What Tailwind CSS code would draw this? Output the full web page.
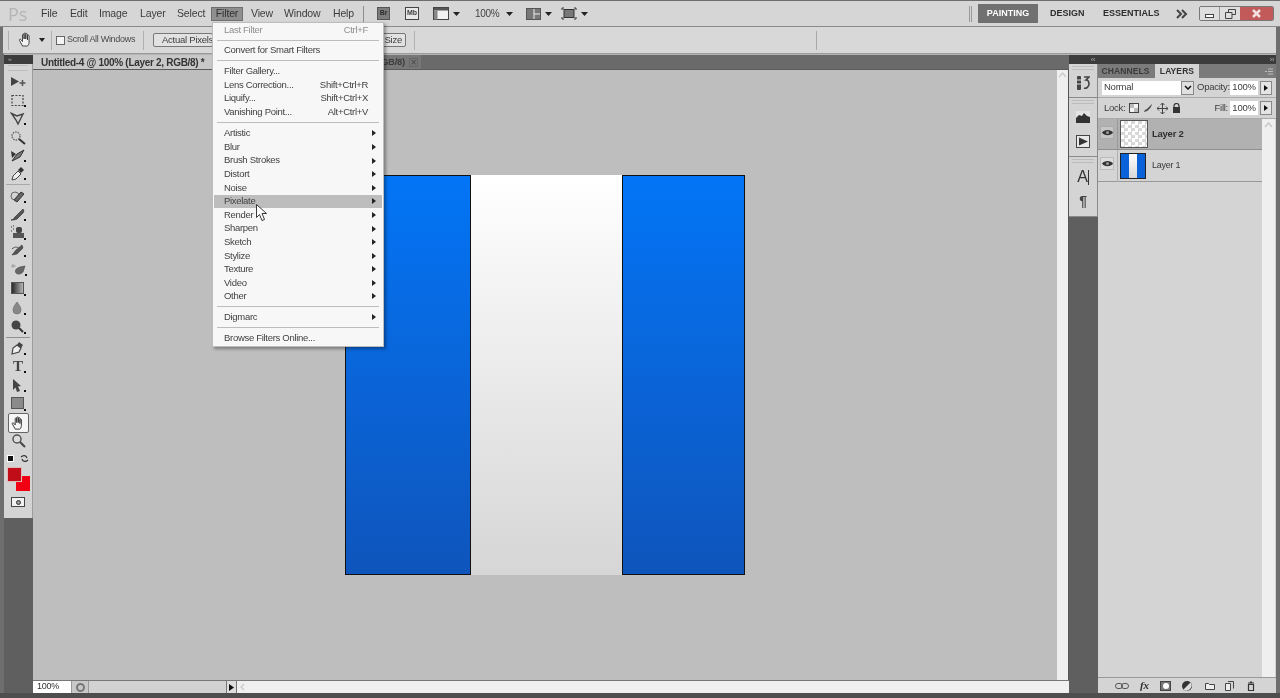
<!DOCTYPE html>
<html lang="en">
<head>
  <meta charset="UTF-8">
  <title>Adobe Photoshop CS5</title>
  <script src="https://cdn.jsdelivr.net/npm/@tailwindcss/browser@4"></script>
</head>
<body class="bg-[#6e6e6e] overflow-hidden">
<div class="relative w-[1280px] h-[698px] flex flex-col bg-[#6e6e6e] text-[#3c3c3c] text-[9.5px] tracking-[-0.25px] font-['Liberation_Sans',sans-serif] overflow-hidden blur-[0.3px]">

  <!-- menu bar -->
  <div class="h-[26px] mt-px shrink-0 flex items-center bg-[#d6d6d6] border-b border-[#8a8a8a] text-[10.5px] tracking-[-0.15px]">
    <span class="ml-[8px] w-[33px] text-[18px] leading-none text-[#b4b4b4] font-['Open_Sans',sans-serif]">Ps</span>
    <span class="w-[29px]">File</span>
    <span class="w-[29px]">Edit</span>
    <span class="w-[41px]">Image</span>
    <span class="w-[37px]">Layer</span>
    <span class="w-[34px]">Select</span>
    <span class="w-[32px] h-[14px] flex items-center justify-center bg-[#8f8f8f] border border-[#6f6f6f] text-[#303030]">Filter</span>
    <span class="ml-[8px] w-[33px]">View</span>
    <span class="w-[49px]">Window</span>
    <span class="w-[30px]">Help</span>
    <span class="w-px h-[16px] bg-[#8c8c8c]"></span>
    <span class="ml-[13px] w-[13px] h-[13px] flex items-center justify-center bg-[#7d7d7d] border border-[#555] text-[7px] font-bold text-[#2c2c2c]">Br</span>
    <span class="ml-[15px] w-[14px] h-[13px] flex items-center justify-center bg-[#e8e8e8] border border-[#444] text-[7px] font-bold">Mb</span>
    <svg class="ml-[14px]" width="16" height="13" viewBox="0 0 16 13"><rect x=".5" y=".5" width="15" height="12" fill="#f2f2f2" stroke="#444"/><rect x="1" y="1" width="14" height="2.5" fill="#555"/><rect x="1" y="3.5" width="3.5" height="9" fill="#888"/></svg>
    <svg class="ml-[4px]" width="7" height="4" viewBox="0 0 7 4"><path d="M0 0h7L3.500 4z" fill="#222"/></svg>
    <span class="ml-[15px] w-[29px] text-[10px] tracking-[-0.3px] text-[#444]">100%</span>
    <svg class="ml-[2px]" width="7" height="4" viewBox="0 0 7 4"><path d="M0 0h7L3.500 4z" fill="#222"/></svg>
    <svg class="ml-[13px]" width="15" height="12" viewBox="0 0 15 12"><rect x=".5" y=".5" width="14" height="11" fill="#777" stroke="#555"/><path d="M8 1v10M8 6h6" stroke="#eee"/></svg>
    <svg class="ml-[4px]" width="7" height="4" viewBox="0 0 7 4"><path d="M0 0h7L3.500 4z" fill="#222"/></svg>
    <svg class="ml-[9px]" width="16" height="13" viewBox="0 0 16 13"><rect x="3" y="2.500" width="10" height="8" fill="#777" stroke="#333"/><path d="M1 3V1h2M13 1h2v2M15 10v2h-2M3 12H1v-2" fill="none" stroke="#333"/></svg>
    <svg class="ml-[4px]" width="7" height="4" viewBox="0 0 7 4"><path d="M0 0h7L3.500 4z" fill="#222"/></svg>
    <span class="ml-auto w-[3px] h-[16px] border-x border-[#9a9a9a]"></span>
    <span class="ml-[6px] w-[60px] h-[19px] flex items-center justify-center bg-[#707070] text-white font-bold text-[9px] tracking-normal">PAINTING</span>
    <span class="ml-[12px] w-[36px] font-bold text-[#2d2d2d] text-[9px] tracking-normal">DESIGN</span>
    <span class="ml-[17px] w-[58px] font-bold text-[#2d2d2d] text-[9px] tracking-normal">ESSENTIALS</span>
    <svg class="ml-[15px]" width="12" height="10" viewBox="0 0 12 10"><path d="M1 1l4 4-4 4M6 1l4 4-4 4" fill="none" stroke="#444" stroke-width="2"/></svg>
    <div class="ml-[11px] mr-[6px] w-[75px] h-[15px] flex border border-[#777] rounded-[2px] overflow-hidden">
      <span class="w-[20px] flex items-center justify-center bg-[#dedede] border-r border-[#999]"><span class="w-[9px] h-[4px] mt-1 border border-[#444] bg-white"></span></span>
      <span class="w-[20px] flex items-center justify-center bg-[#dedede]">
        <svg width="11" height="10" viewBox="0 0 11 10"><path d="M3.500 3V.500h7v5H7M.5 3.500h6.500v6H.5z" fill="none" stroke="#444"/></svg>
      </span>
      <span class="flex-1 flex items-center justify-center bg-[#c25a5a]">
        <svg width="11" height="9" viewBox="0 0 11 9"><path d="M2 1l7 7M9 1L2 8" stroke="#f2e0e0" stroke-width="2.500"/></svg>
      </span>
    </div>
  </div>

  <!-- options bar -->
  <div class="h-[27px] shrink-0 mr-[4px] ml-[3px] flex items-center bg-[#d8d8d8] border-b border-[#9a9a9a]">
    <span class="ml-[5px] h-[19px] w-px bg-[#b0b0b0]"></span>
    <svg class="ml-[9px]" width="16" height="16" viewBox="0 0 16 16"><path d="M4.500 14L1.500 8.500c-.6-1.200.8-1.800 1.500-.8L4.500 9.500V3c0-1.200 1.600-1.200 1.600 0v4-5.200c0-1.200 1.700-1.200 1.700 0V7V2.500c0-1.200 1.700-1.200 1.700 0V8V4c0-1.100 1.600-1.100 1.600 0v6c0 2-1 4-2 4z" fill="#f4f4f4" stroke="#333" stroke-width=".9"/></svg>
    <svg class="ml-[5px]" width="6" height="4" viewBox="0 0 6 4"><path d="M0 0h6L3 4z" fill="#222"/></svg>
    <span class="ml-[6px] h-[19px] w-px bg-[#b0b0b0]"></span>
    <span class="ml-[4px] w-[9px] h-[9px] bg-[#f4f4f4] border border-[#666]"></span>
    <span class="ml-[2px] w-[76px] whitespace-nowrap text-[9px] tracking-[-0.3px] text-[#4a4a4a]">Scroll All Windows</span>
    <span class="h-[19px] w-px bg-[#b0b0b0]"></span>
    <span class="ml-[9px] w-[60px] h-[14px] pl-[8px] flex items-center whitespace-nowrap bg-[#e2e2e2] border border-[#777] rounded-[2px]">Actual Pixels</span>
    <span class="ml-[131px] w-[62px] h-[14px] flex items-center justify-end pr-[3px] bg-[#e2e2e2] border border-[#777] rounded-[2px]">Print Size</span>
    <span class="ml-[8px] h-[19px] w-px bg-[#b0b0b0]"></span>
    <span class="ml-[401px] h-[19px] w-px bg-[#a8a8a8]"></span>
  </div>

  <!-- workspace -->
  <div class="flex-1 min-h-0 flex ml-[4px] mr-[4px] border-t border-[#b4b4b4]">

    <!-- tools -->
    <div class="w-[29px] shrink-0 flex flex-col bg-[#5f5f5f]">
      <div class="h-[9px] shrink-0 bg-[#3c3c3c] text-[#bbb] text-[6px] leading-[9px] pl-[4px]">››</div>
      <div class="h-[454px] shrink-0 flex flex-col items-center bg-[#d4d4d4] border-r border-[#9c9c9c]">
        <div class="w-[20px] h-[6px] mt-px shrink-0 border-y border-[#bcbcbc]"></div>
        <svg class="mt-[5px] shrink-0" width="16" height="12" viewBox="0 0 16 12"><path d="M1 1l8 4.500-8 4.500z" fill="#444"/><path d="M12.500 4v6M9.500 7h6" stroke="#555" stroke-width="1.500"/></svg>
        <svg class="mt-[6px] shrink-0" width="16" height="14" viewBox="0 0 16 14"><rect x="2" y="1.500" width="11" height="10" fill="none" stroke="#444" stroke-width="1.200" stroke-dasharray="2 1.400"/><path d="M14 11h2v2h-2z" fill="#111"/></svg>
        <svg class="mt-[4px] shrink-0" width="16" height="14" viewBox="0 0 16 14"><path d="M1.500 1.500L7 4l6-2-3 6-2 4-2-4z" fill="none" stroke="#444" stroke-width="1.400"/><path d="M14 11h2v2h-2z" fill="#111"/></svg>
        <svg class="mt-[4px] shrink-0" width="16" height="15" viewBox="0 0 16 15"><circle cx="6" cy="6" r="4" fill="none" stroke="#666" stroke-width="1.400" stroke-dasharray="1.500 1"/><path d="M9 9l6 5" stroke="#333" stroke-width="2"/></svg>
        <svg class="mt-[3px] shrink-0" width="16" height="15" viewBox="0 0 16 15"><path d="M2 13l5-7 7-4-4 7z" fill="#777" stroke="#333"/><path d="M1 3l5 3-4 4z" fill="#333"/><path d="M14 12h2v2h-2z" fill="#111"/></svg>
        <svg class="mt-[3px] shrink-0" width="16" height="15" viewBox="0 0 16 15"><path d="M2 14l1-4 5-5 3 3-5 5z" fill="#eee" stroke="#444"/><path d="M8 4l3-3 3 3-3 3z" fill="#333"/><path d="M14 12h2v2h-2z" fill="#111"/></svg>
        <div class="w-[24px] h-px shrink-0 mt-[3px] bg-[#a8a8a8]"></div>
        <svg class="mt-[4px] shrink-0" width="16" height="15" viewBox="0 0 16 15"><circle cx="5" cy="7" r="4" fill="none" stroke="#666"/><path d="M4 11l7-8 3 2-7 8z" fill="#666" stroke="#333"/><path d="M14 12h2v2h-2z" fill="#111"/></svg>
        <svg class="mt-[3px] shrink-0" width="16" height="15" viewBox="0 0 16 15"><path d="M1 13c3 0 3-3 5-4l7-7c1 1 1 3 0 4l-6 6c-2 1-4 1-6 1z" fill="#555" stroke="#333" stroke-width=".7"/><path d="M14 12h2v2h-2z" fill="#111"/></svg>
        <svg class="mt-[3px] shrink-0" width="16" height="15" viewBox="0 0 16 15"><rect x="6" y="2" width="6" height="6" rx="2" fill="#444"/><rect x="3" y="8" width="11" height="5" fill="#555"/><path d="M1 2h1M3 4h1M1 6h1M3 1h1" stroke="#333"/><path d="M14 13h2v2h-2z" fill="#111"/></svg>
        <svg class="mt-[3px] shrink-0" width="16" height="15" viewBox="0 0 16 15"><path d="M2 12l4-5 6-5 1 3-6 6z" fill="#555" stroke="#333" stroke-width=".6"/><path d="M2 6c3-3 6-2 8 0" fill="none" stroke="#555"/><path d="M14 12h2v2h-2z" fill="#111"/></svg>
        <svg class="mt-[5px] shrink-0" width="17" height="13" viewBox="0 0 17 13"><path d="M6 10c-2-3 1-5 4-6l5-1-2 6c-2 2-5 3-7 1z" fill="#666" stroke="#444" stroke-width=".6"/><path d="M1 3h5M3 1v4" stroke="#999"/><path d="M15 11h2v2h-2z" fill="#111"/></svg>
        <svg class="mt-[6px] shrink-0" width="16" height="14" viewBox="0 0 16 14"><defs><linearGradient id="grad"><stop offset="0" stop-color="#222"/><stop offset="1" stop-color="#bbb"/></linearGradient></defs><rect x="1.500" y=".5" width="12" height="11" fill="url(#grad)" stroke="#555"/><path d="M14 12h2v2h-2z" fill="#111"/></svg>
        <svg class="mt-[5px] shrink-0" width="16" height="14" viewBox="0 0 16 14"><path d="M7 1c2 3 4 5 4 8a4 4 0 0 1-8 0c0-3 2-5 4-8z" fill="#888" stroke="#666" stroke-width=".6"/><path d="M14 12h2v2h-2z" fill="#111"/></svg>
        <svg class="mt-[5px] shrink-0" width="16" height="14" viewBox="0 0 16 14"><circle cx="6" cy="5" r="4.500" fill="#444"/><path d="M9 8l4 4" stroke="#333" stroke-width="2"/><path d="M14 12h2v2h-2z" fill="#111"/></svg>
        <div class="w-[24px] h-px shrink-0 mt-[3px] bg-[#8f8f8f]"></div>
        <svg class="mt-[3px] shrink-0" width="16" height="15" viewBox="0 0 16 15"><path d="M2 13l1-6 4-3 4 3-2 4z" fill="#eee" stroke="#444" stroke-width="1.200"/><path d="M7 4l2-3 4 3-2 3z" fill="#444"/><path d="M14 12h2v2h-2z" fill="#111"/></svg>
        <div class="mt-[2px] h-[17px] w-[16px] shrink-0 flex items-center justify-center relative font-['Liberation_Serif',serif] font-bold text-[15px] text-[#444]">T<span class="absolute right-0 bottom-[2px] w-[2px] h-[2px] bg-[#111]"></span></div>
        <svg class="mt-[3px] shrink-0" width="16" height="15" viewBox="0 0 16 15"><path d="M3 1l8 7-3 .5 2 4.500-3 1-1.500-4.500L3 12z" fill="#444"/><path d="M14 12h2v2h-2z" fill="#111"/></svg>
        <svg class="mt-[4px] shrink-0" width="16" height="14" viewBox="0 0 16 14"><rect x="1.500" y=".5" width="12" height="11" fill="#8a8a8a" stroke="#555"/><path d="M14 12h2v2h-2z" fill="#111"/></svg>
        <div class="mt-[2px] w-[21px] h-[20px] shrink-0 flex items-center justify-center bg-[#f5f5f5] border border-[#666] rounded-[2px]">
          <svg width="15" height="15" viewBox="0 0 16 16"><path d="M4.500 14L1.500 8.500c-.6-1.200.8-1.800 1.500-.8L4.500 9.500V3c0-1.200 1.600-1.200 1.600 0v4-5.200c0-1.200 1.700-1.200 1.700 0V7V2.500c0-1.200 1.700-1.200 1.700 0V8V4c0-1.100 1.600-1.100 1.600 0v6c0 2-1 4-2 4z" fill="#f4f4f4" stroke="#333" stroke-width="1"/></svg>
        </div>
        <svg class="mt-[0px] shrink-0" width="15" height="15" viewBox="0 0 15 15"><circle cx="6" cy="6" r="4" fill="#ddd" stroke="#555" stroke-width="1.500"/><path d="M9 9l5 5" stroke="#444" stroke-width="2"/></svg>
        <div class="relative mt-[3px] w-[28px] h-[56px] shrink-0">
          <span class="absolute left-[3px] top-[4px] w-[7px] h-[7px] bg-[#111] border border-white"></span>
          <svg class="absolute left-[16px] top-[3px]" width="9" height="9" viewBox="0 0 9 9"><path d="M1 3c2-2 5-2 6 1M8 6c-2 2-5 2-6-1" fill="none" stroke="#333" stroke-width="1.200"/></svg>
          <span class="absolute left-[12px] top-[25px] w-[14px] h-[15px] bg-[#f00012]"></span>
          <span class="absolute left-[3px] top-[16px] w-[15px] h-[15px] bg-[#c10d18] border border-[#e0b8b8]"></span>
          <span class="absolute left-[7px] top-[46px] w-[14px] h-[10px] flex items-center justify-center bg-[#f2f2f2] border border-[#444]"><span class="w-[5px] h-[5px] rounded-full border border-[#333] bg-[#999]"></span></span>
        </div>
      </div>
    </div>

    <!-- document -->
    <div class="w-[1036px] shrink-0 flex flex-col">
      <div class="h-[15px] shrink-0 flex bg-[#6a6a6a] border-b border-[#5a5a5a]">
        <div class="w-[179px] pl-[8px] flex items-center bg-[#c8c8c8] text-[10px] font-bold tracking-[-0.3px] text-[#333] whitespace-nowrap overflow-hidden">Untitled-4 @ 100% (Layer 2, RGB/8) *</div>
        <div class="w-[209px] pr-[3px] flex items-center justify-end gap-[4px] bg-[#777] text-[#3d3d3d]">
          <span class="font-bold">RGB/8)</span><span class="w-[9px] h-[9px] flex items-center justify-center text-[10px] text-[#444] border border-[#666]">×</span>
        </div>
      </div>
      <div class="flex-1 min-h-0 flex border-r border-[#555]">
        <div class="flex-1 flex items-center justify-center bg-[#bebebe]">
          <div class="w-[400px] h-[400px] flex">
            <div class="w-[126px] border border-[#111] bg-gradient-to-b from-[#0275f6] to-[#0e55bc]"></div>
            <div class="flex-1 bg-gradient-to-b from-white to-[#d6d6d6]"></div>
            <div class="w-[123px] border border-[#111] bg-gradient-to-b from-[#0275f6] to-[#0e55bc]"></div>
          </div>
        </div>
        <div class="w-[11px] shrink-0 flex justify-center pt-[2px] bg-[#efefef] text-[#cfcfcf]">
          <svg width="9" height="6" viewBox="0 0 9 6"><path d="M1 5l3.500-4L8 5" fill="none" stroke="#ccc" stroke-width="1.500"/></svg>
        </div>
      </div>
      <div class="h-[13px] shrink-0 flex border-t border-[#777]">
        <span class="w-[38px] pl-[4px] flex items-center bg-white text-[#333] text-[9px]">100%</span>
        <span class="w-[18px] flex items-center justify-center bg-[#c8c8c8] border-x border-[#999]"><span class="w-[9px] h-[9px] rounded-full border-2 border-[#777]"></span></span>
        <span class="w-[137px] bg-[#d2d2d2]"></span>
        <span class="w-[11px] flex items-center justify-center bg-[#dedede] border-x border-[#777]"><svg width="5" height="7" viewBox="0 0 5 7"><path d="M0 0l5 3.500L0 7z" fill="#111"/></svg></span>
        <span class="flex-1 pl-[3px] flex items-center bg-[#f0f0f0]"><svg width="5" height="8" viewBox="0 0 5 8"><path d="M4 1L1 4l3 3" fill="none" stroke="#ccc" stroke-width="1.500"/></svg></span>
      </div>
    </div>

    <!-- panel icons -->
    <div class="w-[29px] shrink-0 flex flex-col bg-[#5f5f5f]">
      <div class="h-[9px] shrink-0 pr-[3px] text-right text-[#bbb] text-[7px] leading-[9px] bg-[#3c3c3c]">‹‹</div>
      <div class="h-[34px] shrink-0 flex flex-col items-center bg-[#d4d4d4] border-b border-[#8a8a8a] border-r">
        <div class="w-[22px] h-[4px] mt-[2px] border-y border-[#bcbcbc]"></div>
        <svg class="mt-[5px]" width="14" height="16" viewBox="0 0 14 16"><rect x="1" y="1" width="4" height="14" rx="1" fill="#444"/><path d="M1 5h4M1 9h4" stroke="#ddd"/><path d="M8 2h5L10 5c2 0 3 2 3 4 0 3-3 5-5 4" fill="none" stroke="#444" stroke-width="1.600"/></svg>
      </div>
      <div class="h-[59px] shrink-0 flex flex-col items-center bg-[#d4d4d4] border-b border-[#8a8a8a] border-r">
        <div class="w-[22px] h-[4px] mt-[2px] border-y border-[#bcbcbc]"></div>
        <svg class="mt-[7px]" width="14" height="12" viewBox="0 0 14 12"><rect width="14" height="12" fill="#e4e4e4"/><path d="M0 7l3-3 3 1 2-3 3 3 3 1v6H0z" fill="#333"/></svg>
        <svg class="mt-[12px]" width="14" height="13" viewBox="0 0 14 13"><rect x=".5" y=".5" width="13" height="12" fill="#e8e8e8" stroke="#444"/><path d="M3 2.500l9 4-9 4z" fill="#333"/></svg>
      </div>
      <div class="h-[60px] shrink-0 flex flex-col items-center bg-[#d4d4d4] border-b border-[#8a8a8a] border-r">
        <div class="w-[22px] h-[4px] mt-[2px] border-y border-[#bcbcbc]"></div>
        <div class="mt-[6px] h-[16px] flex items-center text-[16px] tracking-normal leading-none text-[#333]">A<span class="w-px h-[15px] bg-[#333]"></span></div>
        <div class="mt-[9px] h-[14px] flex items-center font-bold text-[14px] leading-none text-[#444]">¶</div>
      </div>
    </div>

    <!-- layers panel -->
    <div class="flex-1 min-w-0 flex flex-col bg-[#d4d4d4]">
      <div class="h-[9px] shrink-0 pr-[2px] text-right text-[#bbb] text-[7px] leading-[9px] bg-[#3c3c3c]">››</div>
      <div class="h-[14px] shrink-0 flex items-end bg-[#7b7b7b] text-[8.5px] font-bold tracking-[0.1px]">
        <span class="ml-[2px] w-[51px] h-[14px] flex items-center justify-center text-[#3a3a3a]">CHANNELS</span>
        <span class="ml-[4px] w-[44px] h-[14px] flex items-center justify-center bg-[#d4d4d4] text-[#333]">LAYERS</span>
        <svg class="ml-[66px] mb-[3px]" width="8" height="7" viewBox="0 0 8 7"><path d="M3 1h5M3 3.500h5M3 6h5M0 3.500h2" stroke="#bbb"/></svg>
      </div>
      <div class="h-[20px] shrink-0 flex items-center pl-[4px] border-b border-[#aaa]">
        <span class="w-[92px] h-[14px] flex items-center justify-between pl-[2px] bg-white">Normal<span class="w-[13px] h-[14px] flex items-center justify-center bg-[#e0e0e0] border border-[#888]"><svg width="8" height="5" viewBox="0 0 8 5"><path d="M1 1l3 3 3-3" fill="none" stroke="#111" stroke-width="1.500"/></svg></span></span>
        <span class="ml-[3px] w-[33px] whitespace-nowrap">Opacity:</span>
        <span class="w-[28px] h-[14px] flex items-center justify-center bg-white">100%</span>
        <span class="ml-[2px] w-[12px] h-[14px] flex items-center justify-center bg-[#e4e4e4] border border-[#888]"><svg width="4" height="6" viewBox="0 0 4 6"><path d="M0 0l4 3-4 3z" fill="#111"/></svg></span>
      </div>
      <div class="h-[21px] shrink-0 flex items-center pl-[6px] border-b border-[#aaa]">
        <span class="w-[25px]">Lock:</span>
        <svg width="10" height="10" viewBox="0 0 10 10"><rect x=".5" y=".5" width="9" height="9" fill="#f4f4f4" stroke="#444"/><path d="M1 1h4v4H1zM5 5h4v4H5z" fill="#bbb"/></svg>
        <svg class="ml-[4px]" width="10" height="10" viewBox="0 0 10 10"><path d="M1 9c1-3 2-2 3-3l5-5c0 2-3 6-5 7z" fill="#444"/></svg>
        <svg class="ml-[4px]" width="11" height="11" viewBox="0 0 11 11"><path d="M5.500 0v11M0 5.500h11M3.500 2l2-2 2 2M3.500 9l2 2 2-2M2 3.500l-2 2 2 2M9 3.500l2 2-2 2" fill="none" stroke="#444"/></svg>
        <svg class="ml-[4px]" width="9" height="10" viewBox="0 0 9 10"><path d="M2 4V3a2.500 2.500 0 0 1 5 0v1" fill="none" stroke="#333" stroke-width="1.200"/><rect x="1" y="4" width="7" height="6" fill="#333"/></svg>
        <span class="ml-[32px] w-[15px] text-right mr-[2px]">Fill:</span>
        <span class="w-[28px] h-[14px] flex items-center justify-center bg-white">100%</span>
        <span class="ml-[2px] w-[12px] h-[14px] flex items-center justify-center bg-[#e4e4e4] border border-[#888]"><svg width="4" height="6" viewBox="0 0 4 6"><path d="M0 0l4 3-4 3z" fill="#111"/></svg></span>
      </div>
      <div class="flex-1 min-h-0 flex">
        <div class="w-[164px] shrink-0 flex flex-col">
          <div class="h-[31px] flex items-center bg-[#b1b1b1] border-b border-[#8f8f8f]">
            <span class="ml-[2px] w-[14px] h-[13px] flex items-center justify-center mb-[3px] bg-[#c6c6c6] border border-[#aaa]"><svg width="11" height="7" viewBox="0 0 11 7"><path d="M0 3.500C2 0 9 0 11 3.500 9 7 2 7 0 3.500z" fill="#333"/><circle cx="5.500" cy="3.500" r="1.500" fill="#999"/></svg></span>
            <span class="ml-[3px] w-px h-[31px] bg-[#999]"></span>
            <span class="ml-[2px] w-[28px] h-[28px] border border-[#555] bg-[repeating-conic-gradient(#d8d8d8_0_25%,#fff_0_50%)] bg-[length:7px_7px]"></span>
            <span class="ml-[4px] font-bold text-[#2f2f2f]">Layer 2</span>
          </div>
          <div class="h-[32px] flex items-center border-b border-[#999]">
            <span class="ml-[2px] w-[14px] h-[13px] flex items-center justify-center mb-[5px] bg-[#dcdcdc] border border-[#bbb]"><svg width="11" height="7" viewBox="0 0 11 7"><path d="M0 3.500C2 0 9 0 11 3.500 9 7 2 7 0 3.500z" fill="#333"/><circle cx="5.500" cy="3.500" r="1.500" fill="#999"/></svg></span>
            <span class="ml-[3px] w-px h-[32px] bg-[#b0b0b0]"></span>
            <span class="ml-[2px] w-[26px] h-[26px] flex border border-[#222] bg-[#0a62d8]"><span class="w-[8px]"></span><span class="flex-1 bg-gradient-to-b from-white to-[#d6d6d6]"></span><span class="w-[8px]"></span></span>
            <span class="ml-[6px] text-[#3a3a3a] text-[9px]">Layer 1</span>
          </div>
        </div>
        <div class="flex-1 mr-px flex flex-col items-center pt-[3px] bg-[#efefef]">
          <svg width="9" height="6" viewBox="0 0 9 6"><path d="M1 5l3.500-4L8 5" fill="none" stroke="#c8c8c8" stroke-width="1.500"/></svg>
        </div>
      </div>
      <div class="h-[16px] shrink-0 flex items-center pl-[17px] border-t border-[#999]">
        <svg width="14" height="6" viewBox="0 0 14 6"><rect x=".5" y=".5" width="7" height="5" rx="2.500" fill="none" stroke="#555"/><rect x="6.500" y=".5" width="7" height="5" rx="2.500" fill="none" stroke="#555"/></svg>
        <span class="ml-[11px] w-[14px] font-['Liberation_Serif',serif] font-bold italic text-[11px] leading-none text-[#333]">fx</span>
        <span class="ml-[6px] w-[11px] h-[10px] flex items-center justify-center bg-[#777] border border-[#444]"><span class="w-[6px] h-[6px] rounded-full bg-white"></span></span>
        <svg class="ml-[11px]" width="10" height="10" viewBox="0 0 10 10"><circle cx="5" cy="5" r="5" fill="#333"/><path d="M8.500 1.500a5 5 0 0 1-7 7z" fill="#ddd"/></svg>
        <svg class="ml-[13px]" width="10" height="8" viewBox="0 0 10 8"><path d="M.5 1.500h3l1 1h5v5h-9z" fill="#eee" stroke="#444"/></svg>
        <svg class="ml-[10px]" width="9" height="10" viewBox="0 0 9 10"><path d="M.5 2.500h5v7h-5z" fill="#eee" stroke="#444"/><path d="M3 .5h5.500v7" fill="none" stroke="#444"/></svg>
        <svg class="ml-[13px]" width="8" height="10" viewBox="0 0 8 10"><path d="M1 2h6M3 1h2M1.500 3.500h5v6h-5z" fill="none" stroke="#333" stroke-width="1.200"/></svg>
      </div>
    </div>
  </div>

  <!-- bottom edge -->
  <div class="h-[5px] shrink-0 bg-[#4e4e4e]"></div>

  <!-- filter menu -->
  <div class="absolute left-[212px] top-[22px] w-[172px] h-[325px] px-[1px] flex flex-col bg-[#f7f7f7] border border-[#bdbdbd] shadow-[2px_2px_3px_rgba(0,0,0,0.35)] text-[#3f3f3f] tracking-[-0.3px]">
    <div class="h-[13.6px] shrink-0 pl-[10px] pr-[14px] flex items-center justify-between text-[#8e8e8e]"><span>Last Filter</span><span>Ctrl+F</span></div>
    <div class="h-[7px] shrink-0 mx-[3px] flex items-center"><div class="w-full h-px bg-[#bcbcbc]"></div></div>
    <div class="h-[13.6px] shrink-0 pl-[10px] flex items-center">Convert for Smart Filters</div>
    <div class="h-[7.4px] shrink-0 mx-[3px] flex items-center"><div class="w-full h-px bg-[#bcbcbc]"></div></div>
    <div class="h-[13.6px] shrink-0 pl-[10px] flex items-center">Filter Gallery...</div>
    <div class="h-[13.6px] shrink-0 pl-[10px] pr-[14px] flex items-center justify-between"><span>Lens Correction...</span><span>Shift+Ctrl+R</span></div>
    <div class="h-[13.6px] shrink-0 pl-[10px] pr-[14px] flex items-center justify-between"><span>Liquify...</span><span>Shift+Ctrl+X</span></div>
    <div class="h-[13.6px] shrink-0 pl-[10px] pr-[14px] flex items-center justify-between"><span>Vanishing Point...</span><span>Alt+Ctrl+V</span></div>
    <div class="h-[7.600px] shrink-0 mx-[3px] flex items-center"><div class="w-full h-px bg-[#bcbcbc]"></div></div>
    <div class="h-[13.6px] shrink-0 pl-[10px] pr-[6px] flex items-center justify-between"><span>Artistic</span><span class="border-y-[3px] border-l-[4px] border-y-transparent border-l-[#222]"></span></div>
    <div class="h-[13.6px] shrink-0 pl-[10px] pr-[6px] flex items-center justify-between"><span>Blur</span><span class="border-y-[3px] border-l-[4px] border-y-transparent border-l-[#222]"></span></div>
    <div class="h-[13.6px] shrink-0 pl-[10px] pr-[6px] flex items-center justify-between"><span>Brush Strokes</span><span class="border-y-[3px] border-l-[4px] border-y-transparent border-l-[#222]"></span></div>
    <div class="h-[13.6px] shrink-0 pl-[10px] pr-[6px] flex items-center justify-between"><span>Distort</span><span class="border-y-[3px] border-l-[4px] border-y-transparent border-l-[#222]"></span></div>
    <div class="h-[13.6px] shrink-0 pl-[10px] pr-[6px] flex items-center justify-between"><span>Noise</span><span class="border-y-[3px] border-l-[4px] border-y-transparent border-l-[#222]"></span></div>
    <div class="h-[13.6px] shrink-0 pl-[10px] pr-[6px] flex items-center justify-between bg-[#bdbdbd]"><span>Pixelate</span><span class="border-y-[3px] border-l-[4px] border-y-transparent border-l-[#222]"></span></div>
    <div class="h-[13.6px] shrink-0 pl-[10px] pr-[6px] flex items-center justify-between"><span>Render</span><span class="border-y-[3px] border-l-[4px] border-y-transparent border-l-[#222]"></span></div>
    <div class="h-[13.6px] shrink-0 pl-[10px] pr-[6px] flex items-center justify-between"><span>Sharpen</span><span class="border-y-[3px] border-l-[4px] border-y-transparent border-l-[#222]"></span></div>
    <div class="h-[13.6px] shrink-0 pl-[10px] pr-[6px] flex items-center justify-between"><span>Sketch</span><span class="border-y-[3px] border-l-[4px] border-y-transparent border-l-[#222]"></span></div>
    <div class="h-[13.6px] shrink-0 pl-[10px] pr-[6px] flex items-center justify-between"><span>Stylize</span><span class="border-y-[3px] border-l-[4px] border-y-transparent border-l-[#222]"></span></div>
    <div class="h-[13.6px] shrink-0 pl-[10px] pr-[6px] flex items-center justify-between"><span>Texture</span><span class="border-y-[3px] border-l-[4px] border-y-transparent border-l-[#222]"></span></div>
    <div class="h-[13.6px] shrink-0 pl-[10px] pr-[6px] flex items-center justify-between"><span>Video</span><span class="border-y-[3px] border-l-[4px] border-y-transparent border-l-[#222]"></span></div>
    <div class="h-[13.6px] shrink-0 pl-[10px] pr-[6px] flex items-center justify-between"><span>Other</span><span class="border-y-[3px] border-l-[4px] border-y-transparent border-l-[#222]"></span></div>
    <div class="h-[7px] shrink-0 mx-[3px] flex items-center"><div class="w-full h-px bg-[#bcbcbc]"></div></div>
    <div class="h-[13.6px] shrink-0 pl-[10px] pr-[6px] flex items-center justify-between"><span>Digmarc</span><span class="border-y-[3px] border-l-[4px] border-y-transparent border-l-[#222]"></span></div>
    <div class="h-[7px] shrink-0 mx-[3px] flex items-center"><div class="w-full h-px bg-[#bcbcbc]"></div></div>
    <div class="h-[13.6px] shrink-0 pl-[10px] flex items-center">Browse Filters Online...</div>
  </div>

  <!-- mouse cursor -->
  <svg class="absolute left-[256px] top-[204px]" width="11" height="18" viewBox="0 0 11 18"><path d="M.5.500v13l3-3 2.500 6 2.500-1-2.500-6h4.500z" fill="#fff" stroke="#222" stroke-width=".9"/></svg>
</div>
</body>
</html>
